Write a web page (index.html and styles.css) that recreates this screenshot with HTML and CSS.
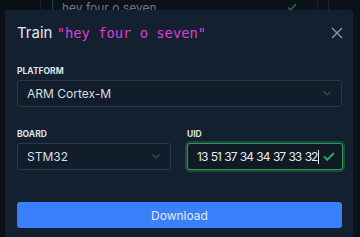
FILE: index.html
```html
<!DOCTYPE html>
<html>
<head>
<meta charset="utf-8">
<link rel="stylesheet" href="styles.css">
</head>
<body>
<div class="page">
  <div class="bg-row">
    <div class="bg-side"></div>
    <div class="bg-main">
      <span class="bg-text">hey four o seven</span>
      <svg class="bg-check" width="10" height="8" viewBox="0 0 10 8"><path d="M1 4.5 L3.5 7 L9 1" fill="none" stroke="#2f6b55" stroke-width="1.6"/></svg>
    </div>
    <div class="bg-col"></div>
    <div class="bg-rest"></div>
  </div>
</div>

<div class="modal">
  <div class="modal-head">
    <h1 class="title">Train <span class="phrase">"hey four o seven"</span></h1>
    <svg class="close" width="12" height="12" viewBox="0 0 12 12"><path d="M1 1 L11 11 M11 1 L1 11" stroke="#8b97a4" stroke-width="1.4" fill="none"/></svg>
  </div>

  <div class="field">
    <div class="label">PLATFORM</div>
    <div class="select">
      <span>ARM Cortex-M</span>
      <svg class="chev" width="8" height="5" viewBox="0 0 8 5"><path d="M0.5 0.5 L4 4 L7.5 0.5" fill="none" stroke="#3b4b5c" stroke-width="1.1"/></svg>
    </div>
  </div>

  <div class="grid">
    <div class="field">
      <div class="label">BOARD</div>
      <div class="select">
        <span>STM32</span>
        <svg class="chev" width="8" height="5" viewBox="0 0 8 5"><path d="M0.5 0.5 L4 4 L7.5 0.5" fill="none" stroke="#3b4b5c" stroke-width="1.1"/></svg>
      </div>
    </div>
    <div class="field">
      <div class="label">UID</div>
      <div class="input ok">
        <span class="uid">13 51 37 34 34 37 33 32</span><span class="caret"></span>
        <svg class="ok-check" width="12" height="9" viewBox="0 0 12 9"><path d="M1 4.5 L4.3 7.8 L11 1" fill="none" stroke="#2ea463" stroke-width="2"/></svg>
      </div>
    </div>
  </div>

  <button class="btn">Download</button>
</div>
</body>
</html>
```

FILE: styles.css
```css
* { box-sizing: border-box; }
html, body { margin: 0; padding: 0; }
body {
  background: #0a1017;
  width: 360px;
  height: 237px;
  overflow: hidden;
  font-family: "Inter", "Noto Sans", sans-serif;
  position: relative;
}
.page { height: 237px; }
.bg-row { display: flex; height: 237px; }
.bg-side { width: 41px; border-right: 1px solid #18222c; background: #0a1016; }
.bg-main {
  width: 265px;
  margin-left: 11px;
  border-left: 1px solid #1b4444;
  display: flex;
  align-items: flex-start;
  padding: 0 0 0 9px;
  position: relative;
  background: #0b1219;
}
.bg-text { color: #6f7a86; font-size: 12px; line-height: 13px; margin-top: 1px; }
.bg-check { position: absolute; left: 234px; top: 3px; }
.bg-col { width: 12px; border-left: 1px solid #1a242e; border-right: 1px solid #1a242e; background: #0b1218; }
.bg-rest { flex: 1; background: #0b1118; }

.modal {
  position: absolute;
  left: 5px;
  top: 10px;
  width: 348px;
  height: 227px;
  background: #132030;
  border-radius: 3px 3px 0 0;
  padding: 0 11px 0 12px;
}
.modal-head {
  display: flex;
  align-items: center;
  justify-content: space-between;
  height: 44px;
  padding-top: 1px;
}
.title {
  margin: 0;
  font-size: 15px;
  font-weight: 400;
  color: #e4e8ec;
  white-space: nowrap;
}
.phrase {
  font-family: "DejaVu Sans Mono", "Liberation Mono", monospace;
  font-size: 13.8px;
  color: #dd3fd0;
}
.close { margin-right: -1px; }

.field { display: flex; flex-direction: column; min-width: 0; }
.label {
  font-size: 8.5px;
  font-weight: 700;
  color: #dfe4e9;
  line-height: 12px;
  margin-top: 11px;
  margin-bottom: 3px;
}
.select, .input {
  height: 27px;
  border: 1px solid #2a3949;
  border-radius: 3px;
  background: #111d2a;
  display: flex;
  align-items: center;
  padding: 0 10px 0 9px;
  font-size: 12px;
  color: #d9dee3;
  white-space: nowrap;
}
.select span { flex: 1; }

.grid {
  display: grid;
  grid-template-columns: 154px 156px;
  column-gap: 16px;
  margin-top: 10px;
}
.input.ok {
  border: 1px solid #2c9a60;
  box-shadow: 0 0 0 2px #1b4a39;
  background: #0f1a25;
  padding: 0 7px 0 9px;
  color: #e6eaee;
}
.uid { font-size: 12px; letter-spacing: -1px; word-spacing: 1px; }
.caret { width: 1px; height: 14px; background: #e6eaee; margin-left: 1px; flex: none; }
.ok-check { margin-left: auto; flex: none; }

.btn {
  display: block;
  width: 100%;
  height: 26px;
  margin-top: 32px;
  border: none;
  border-radius: 3px;
  background: #3a80fb;
  color: #e2eaf8;
  font-family: "Inter", "Noto Sans", sans-serif;
  font-size: 12px;
}
```
